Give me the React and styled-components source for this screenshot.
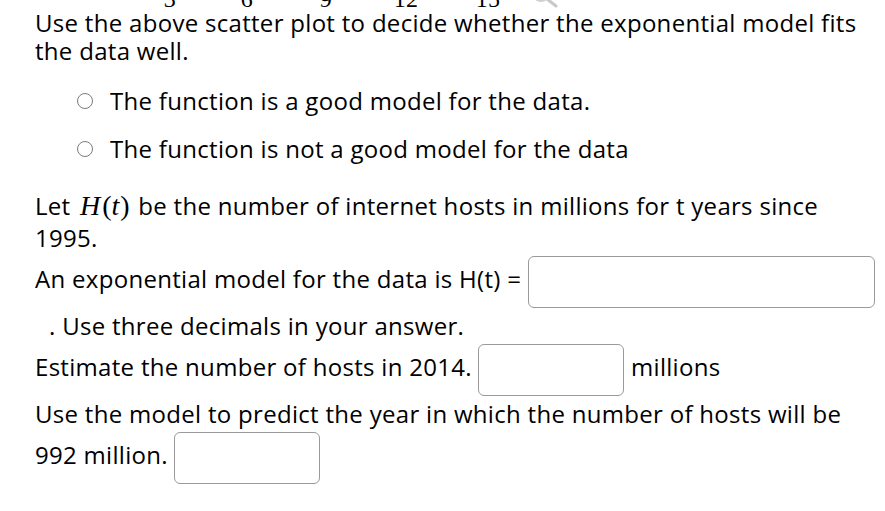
import React from "react";
import styled, { createGlobalStyle } from "styled-components";

const Global = createGlobalStyle`
  html, body { margin: 0; padding: 0; background: #fff; }
  body {
    font-family: "Open Sans", Lato, sans-serif;
    color: #000;
    font-size: 24px;
    letter-spacing: 0.3px;
    font-variant-ligatures: none;
  }
`;

const Page = styled.div`
  padding: 0 8px 0 35px;
  width: 885px;
  box-sizing: border-box;
  overflow: hidden;
`;

const AxisStrip = styled.svg`
  display: block;
  margin-left: -35px;
  width: 885px;
  height: 9px;
`;

const Para = styled.p`
  margin: ${(p) => p.$mt || 0}px 0 0 0;
  line-height: ${(p) => p.$lh || 32}px;
  padding-left: ${(p) => p.$indent || 0}px;
`;

const Options = styled.div`
  display: flex;
  flex-direction: column;
  gap: 20px;
  margin: 22px 0 0 42px;
`;

const Option = styled.label`
  display: flex;
  align-items: center;
  height: 28px;
  gap: 17px;
  line-height: 28px;
`;

const Radio = styled.span`
  width: 16px;
  height: 16px;
  border-radius: 50%;
  border: 1.5px solid #7a7a7a;
  box-sizing: border-box;
  background: #fff;
  flex: none;
`;

const Math = styled.span`
  font-family: "Liberation Serif", "Times New Roman", serif;
  font-size: 28px;
  letter-spacing: 0;
  margin: 0 2px 0 3px;
`;

const MathVar = styled.i`
  font-style: italic;
  padding-right: ${(p) => p.$pad || 0}px;
`;

const Answer = styled.span`
  display: inline-block;
  vertical-align: middle;
  width: ${(p) => p.$w}px;
  height: 52px;
  margin: 2px 0;
  box-sizing: border-box;
  border: 1px solid #9a9a9a;
  border-radius: 6px;
  background: #fff;
`;

export default function App() {
  const ticks = [
    ["3", 170],
    ["6", 247],
    ["9", 326],
    ["12", 406],
    ["15", 488],
  ];
  return (
    <Page>
      <Global />
      <AxisStrip viewBox="0 0 885 9" aria-hidden="true">
        {ticks.map(([t, x]) => (
          <text
            key={t}
            x={x}
            y={7}
            textAnchor="middle"
            fontFamily="Liberation Serif, serif"
            fontSize="24"
            fill="#000"
          >
            {t}
          </text>
        ))}
        <circle cx="541" cy="-7" r="8" fill="none" stroke="#d0d0d0" strokeWidth="2" />
        <line x1="547" y1="-1" x2="556" y2="6" stroke="#c8c8c8" strokeWidth="3" strokeLinecap="round" />
      </AxisStrip>

      <Para $lh={28}>
        Use the above scatter plot to decide whether the exponential model fits the data well.
      </Para>

      <Options>
        <Option>
          <Radio />
          The function is a good model for the data.
        </Option>
        <Option>
          <Radio />
          The function is not a good model for the data
        </Option>
      </Options>

      <Para $mt={27}>
        Let{" "}
        <Math>
          <MathVar $pad={2}>H</MathVar>(<MathVar $pad={1}>t</MathVar>)
        </Math>{" "}
        be the number of internet hosts in millions for t years since 1995.
      </Para>

      <Para>
        An exponential model for the data is H(t) = <Answer $w={347} />
      </Para>
      <Para $indent={14}>. Use three decimals in your answer.</Para>
      <Para>
        Estimate the number of hosts in 2014. <Answer $w={146} /> millions
      </Para>
      <Para>
        Use the model to predict the year in which the number of hosts will be 992 million.{" "}
        <Answer $w={146} />
      </Para>
    </Page>
  );
}
